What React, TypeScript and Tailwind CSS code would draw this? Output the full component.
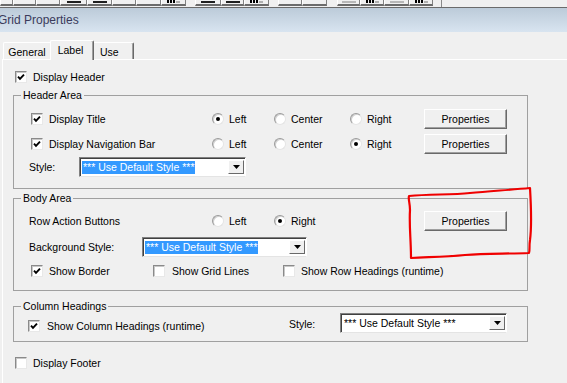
import React from 'react';

type ToolItem = { w: number; gap?: number; mark?: 'dark' | 'grey' | 'icon' };

const toolbar: ToolItem[] = [
  { w: 13 },
  { w: 23 },
  { w: 24 },
  { w: 27, mark: 'dark' },
  { w: 25, mark: 'dark' },
  { w: 24 },
  { w: 25 },
  { w: 25, mark: 'icon' },
  { w: 26, gap: 9, mark: 'dark' },
  { w: 23, mark: 'dark' },
  { w: 25, mark: 'icon' },
  { w: 24, gap: 9 },
  { w: 25 },
  { w: 23, gap: 10, mark: 'grey' },
  { w: 24, mark: 'icon' },
  { w: 25, mark: 'grey' },
  { w: 24, mark: 'icon' },
];

function Check({ checked }: { checked?: boolean }) {
  return (
    <span className="w-[12px] h-[12px] shrink-0 bg-white border border-t-[#8a8a8a] border-l-[#8a8a8a] border-r-[#e8e8e8] border-b-[#e8e8e8] shadow-[inset_1px_1px_0_#c8c8c8] flex items-center justify-center">
      {checked && (
        <svg width="8" height="8" viewBox="0 0 8 8">
          <path d="M1 3.6 L3 5.8 L7 1.6" stroke="#000" strokeWidth="1.9" fill="none" />
        </svg>
      )}
    </span>
  );
}

function Radio({ on }: { on?: boolean }) {
  return (
    <span className="w-[12px] h-[12px] shrink-0 rounded-full bg-white border border-t-[#9a9a9a] border-l-[#9a9a9a] border-r-[#e4e4e4] border-b-[#e4e4e4] shadow-[inset_1px_1px_0_#d0d0d0] flex items-center justify-center">
      {on && <span className="w-[4px] h-[4px] rounded-full bg-black" />}
    </span>
  );
}

function Option({ label, on, width }: { label: string; on?: boolean; width: string }) {
  return (
    <div className={`${width} flex items-center shrink-0`}>
      <Radio on={on} />
      <span className="ml-[5px]">{label}</span>
    </div>
  );
}

function PropButton() {
  return (
    <div className="w-[83px] h-[20px] shrink-0 flex items-center justify-center bg-[#f0f0f0] border border-t-white border-l-white border-r-[#696969] border-b-[#696969] shadow-[inset_-1px_-1px_0_#a0a0a0]">
      Properties
    </div>
  );
}

function Combo({ width, highlight }: { width: string; highlight?: boolean }) {
  return (
    <div className={`${width} h-[20px] shrink-0 flex bg-white border border-t-[#808080] border-l-[#808080] border-r-white border-b-[#e4e4e4] shadow-[inset_1px_1px_0_#404040]`}>
      <div className="flex-1 flex items-center pl-[2px] pt-[1px]">
        <span className={highlight ? 'bg-[#3399ff] text-white px-[1px] leading-[13px]' : 'px-[1px] leading-[13px]'}>
          *** Use Default Style ***
        </span>
      </div>
      <div className="w-[16px] my-[2px] mr-[1px] flex items-center justify-center bg-[#f0f0f0] border border-t-white border-l-white border-r-[#696969] border-b-[#696969]">
        <svg width="7" height="4" viewBox="0 0 7 4">
          <polygon points="0,0 7,0 3.5,4" fill="#000" />
        </svg>
      </div>
    </div>
  );
}

function Group({ title, children, className }: { title: string; children?: React.ReactNode; className?: string }) {
  return (
    <fieldset className={`ml-[10px] w-[515px] border border-[#a0a0a0] ${className ?? ''}`}>
      <legend className="ml-[7px] px-[2px] leading-[12px]">{title}</legend>
      {children}
    </fieldset>
  );
}

export default function App() {
  return (
    <div className="relative w-[567px] h-[383px] overflow-hidden bg-[#f0f0f0] flex flex-col font-['Liberation_Sans',Arial,sans-serif] text-[10.5px] leading-[12px] text-black">
      {/* toolbar (cut off at top) */}
      <div className="h-[7px] flex items-start overflow-hidden shrink-0">
        {toolbar.map((t, i) => (
          <div
            key={i}
            style={{ width: t.w, marginLeft: t.gap ?? 0 }}
            className="h-[6px] shrink-0 flex items-end justify-center bg-[#f0f0f0] border-l border-l-white border-r border-r-[#808080] border-b-2 border-b-[#6b6b6b]"
          >
            {t.mark === 'dark' && <span className="w-[14px] h-[2px] mb-[1px] bg-[#202020]" />}
            {t.mark === 'grey' && <span className="w-[14px] h-[2px] mb-[1px] bg-[#b8b8b8]" />}
            {t.mark === 'icon' && (
              <span className="flex items-end gap-[1px] mb-[1px]">
                <span className="w-[2px] h-[3px] bg-black" />
                <span className="w-[2px] h-[3px] bg-black" />
                <span className="w-[2px] h-[3px] bg-black" />
                <span className="w-[4px] h-[2px] bg-[#b0b0b0]" />
              </span>
            )}
          </div>
        ))}
        <div className="ml-[8px] w-px h-[7px] bg-[#8a8a8a]" />
      </div>
      <div className="h-px bg-[#6b6b6b] shrink-0" />

      {/* dialog title */}
      <div className="h-[24px] shrink-0 flex items-center bg-linear-to-b from-[#bccbd9] to-[#d8e4f0]">
        <span className="-ml-[2px] text-[12px] text-[#3b3b5c]">Grid Properties</span>
      </div>

      {/* tabs */}
      <div className="h-[27px] shrink-0 flex items-end pl-[3px]">
        <div className="w-[47px] h-[17px] flex items-center justify-center pt-[1px] rounded-tl-[2px] border-t border-l border-white">
          General
        </div>
        <div className="relative z-10 -mb-px w-[44px] h-[20px] flex items-start justify-center pt-[3px] pr-[3px] bg-[#f0f0f0] rounded-t-[2px] border-t border-l border-white border-r border-r-[#696969] shadow-[inset_-1px_0_0_#a0a0a0]">
          Label
        </div>
        <div className="w-[40px] h-[17px] flex items-center pl-[6px] pt-[1px] rounded-tr-[2px] border-t border-white border-r border-r-[#696969] shadow-[inset_-1px_0_0_#a0a0a0]">
          Use
        </div>
      </div>

      {/* tab panel */}
      <div className="flex-1 ml-[2px] border-t border-l border-white flex flex-col">
        <div className="mt-[7px] h-[20px] flex items-center pl-[12px]">
          <Check checked />
          <span className="ml-[6px]">Display Header</span>
        </div>

        <Group title="Header Area" className="mt-[2px]">
          <div className="pt-[8px] pb-[11px] pl-[15px] flex flex-col">
            <div className="h-[20px] flex items-center">
              <div className="w-[183px] flex items-center shrink-0">
                <span className="ml-[2px]"><Check checked /></span>
                <span className="ml-[6px]">Display Title</span>
              </div>
              <Option label="Left" on width="w-[62px]" />
              <Option label="Center" width="w-[76px]" />
              <Option label="Right" width="w-[74px]" />
              <PropButton />
            </div>
            <div className="mt-[5px] h-[20px] flex items-center">
              <div className="w-[183px] flex items-center shrink-0">
                <span className="ml-[2px]"><Check checked /></span>
                <span className="ml-[6px]">Display Navigation Bar</span>
              </div>
              <Option label="Left" width="w-[62px]" />
              <Option label="Center" width="w-[76px]" />
              <Option label="Right" on width="w-[74px]" />
              <PropButton />
            </div>
            <div className="mt-[3px] h-[20px] flex items-center">
              <span className="w-[50px] shrink-0">Style:</span>
              <Combo width="w-[167px]" highlight />
            </div>
          </div>
        </Group>

        <Group title="Body Area" className="mt-[3px]">
          <div className="pt-[7px] pb-[9px] pl-[15px] flex flex-col">
            <div className="h-[20px] flex items-center">
              <span className="w-[183px] shrink-0">Row Action Buttons</span>
              <Option label="Left" width="w-[62px]" />
              <Option label="Right" on width="w-[150px]" />
              <PropButton />
            </div>
            <div className="mt-[6px] h-[20px] flex items-center">
              <span className="w-[113px] shrink-0">Background Style:</span>
              <Combo width="w-[165px]" highlight />
            </div>
            <div className="mt-[4px] h-[20px] flex items-center">
              <div className="w-[124px] flex items-center shrink-0">
                <span className="ml-[2px]"><Check checked /></span>
                <span className="ml-[6px]">Show Border</span>
              </div>
              <div className="w-[130px] flex items-center shrink-0">
                <Check />
                <span className="ml-[7px]">Show Grid Lines</span>
              </div>
              <div className="flex items-center">
                <Check />
                <span className="ml-[6px]">Show Row Headings (runtime)</span>
              </div>
            </div>
          </div>
        </Group>

        <Group title="Column Headings" className="mt-[9px]">
          <div className="pt-[1px] pb-[8px] pl-[15px]">
            <div className="h-[20px] flex items-center">
              <div className="w-[260px] mt-[5px] flex items-center shrink-0">
                <span className="-ml-[1px]"><Check checked /></span>
                <span className="ml-[7px]">Show Column Headings (runtime)</span>
              </div>
              <span className="w-[51px] shrink-0 mt-[2px]">Style:</span>
              <Combo width="w-[167px]" />
            </div>
          </div>
        </Group>

        <div className="mt-[11px] h-[20px] flex items-center pl-[12px]">
          <Check />
          <span className="ml-[6px]">Display Footer</span>
        </div>

        <Group title="Footer Area" className="mt-[8px] text-[#a0a0a0]">
          <div className="h-[40px]" />
        </Group>
      </div>

      {/* red hand-drawn highlight */}
      <svg className="absolute inset-0 pointer-events-none" width="567" height="383" viewBox="0 0 567 383">
        <path
          d="M409 196 C430 194 450 195 470 193 C490 191 510 190 530 188 C531 205 532 225 530 240 C529 246 530 250 529 253 C505 254 485 253 465 255 C445 257 428 257 411 258 C411 240 409 225 410 210 C410 203 408 199 409 196 Z"
          stroke="#f00000"
          strokeWidth="2.2"
          fill="none"
          strokeLinejoin="round"
        />
      </svg>
    </div>
  );
}
